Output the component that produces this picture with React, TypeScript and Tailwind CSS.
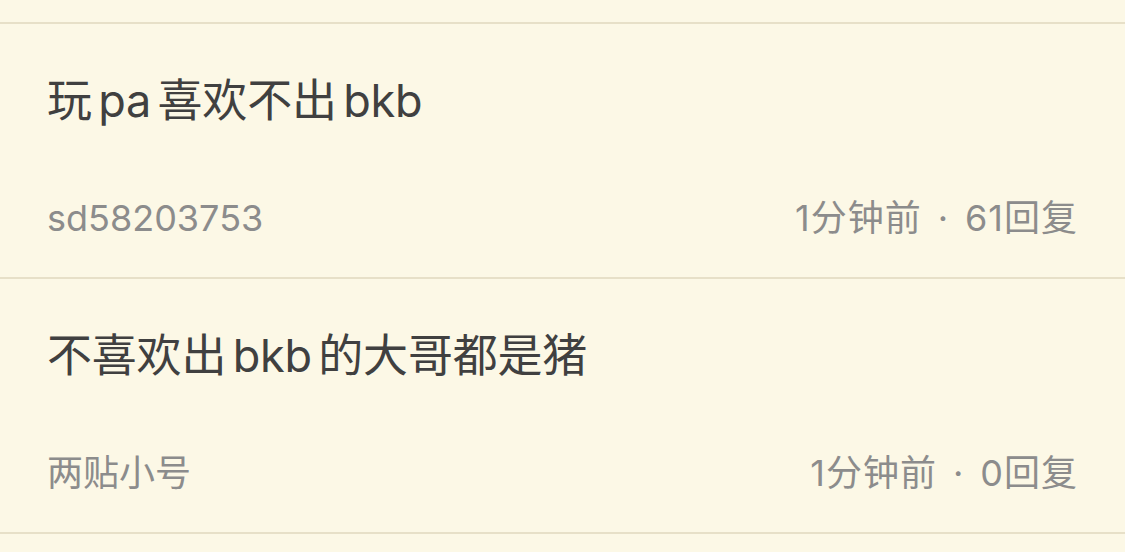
const posts = [
  { title: "玩 pa 喜欢不出 bkb", author: "sd58203753", time: "1分钟前", replies: 61 },
  { title: "不喜欢出 bkb 的大哥都是猪", author: "两贴小号", time: "1分钟前", replies: 0 },
];

export default function App() {
  return (
    <div className="min-h-[552px] bg-[#fcf8e6] font-['Inter','Noto_Sans_CJK_SC',sans-serif]">
      {/* tail of the previous post, scrolled off the top */}
      <div className="h-[24px] border-b-2 border-[#e7e0c8]" />
      {posts.map((p) => (
        <div key={p.author} className="flex flex-col px-[47px] pt-[47px] pb-[35px] border-b-2 border-[#e7e0c8]">
          <div className="text-[45px] leading-[60px] tracking-[-0.2px] [word-spacing:-6px] text-[#404040]">{p.title}</div>
          <div className="mt-[63px] flex items-center justify-between text-[36px] leading-[48px] text-[#8c8c8c]">
            <span>{p.author}</span>
            <span className="flex items-center tracking-[1px]">
              <span>{p.time}</span>
              <span className="mx-[16px]">·</span>
              <span>{p.replies}回复</span>
            </span>
          </div>
        </div>
      ))}
    </div>
  );
}
